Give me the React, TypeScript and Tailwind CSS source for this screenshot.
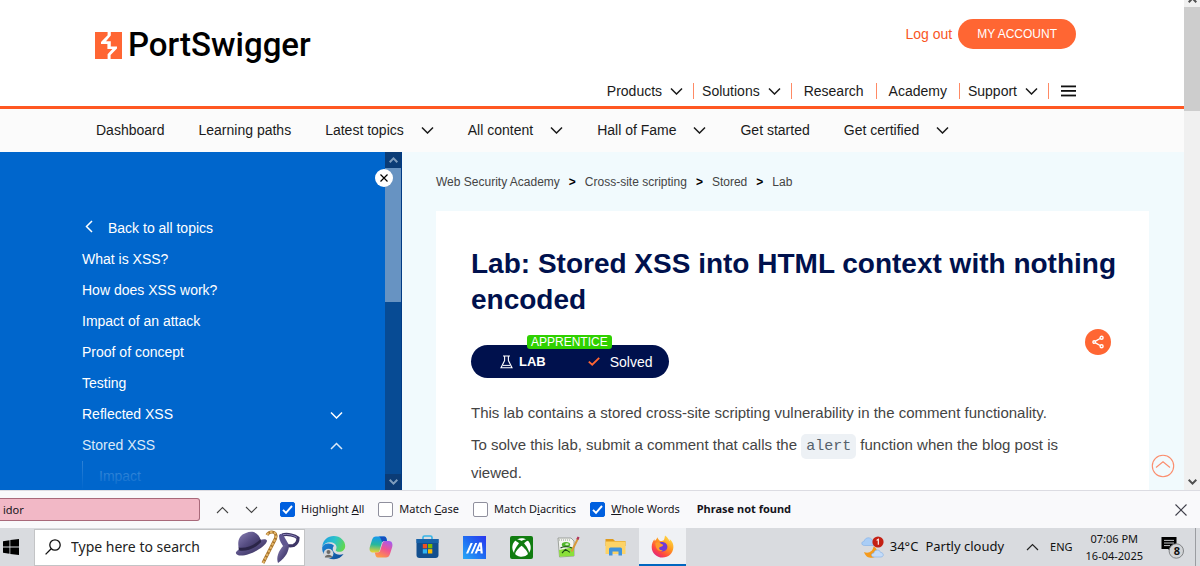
import type { ReactNode } from "react";
import { FaXbox } from "react-icons/fa";

type Direction = "up" | "down" | "left";

const chevronPaths: Record<Direction, string> = {
  down: "M1 1.5 L6.5 7 L12 1.5",
  up: "M1 7 L6.5 1.5 L12 7",
  left: "M7 1 L1.5 6.5 L7 12",
};

function Chevron({ direction = "down", className = "" }: { direction?: Direction; className?: string }) {
  const vertical = direction === "left";
  return (
    <svg
      width={vertical ? 8 : 13}
      height={vertical ? 13 : 8}
      viewBox={vertical ? "0 0 8 13" : "0 0 13 8"}
      fill="none"
      stroke="currentColor"
      strokeWidth="1.5"
      className={className}
      aria-hidden="true"
    >
      <path d={chevronPaths[direction]} />
    </svg>
  );
}

function ScrollArrow({ direction }: { direction: "up" | "down" }) {
  return (
    <svg width="9" height="6" viewBox="0 0 9 6" fill="none" stroke="currentColor" strokeWidth="2" aria-hidden="true">
      <path d={direction === "up" ? "M0.7 5.2 L4.5 1.4 L8.3 5.2" : "M0.7 0.8 L4.5 4.6 L8.3 0.8"} />
    </svg>
  );
}

function Logo() {
  return (
    <a href="#home" className="flex items-center gap-[6px] text-black">
      <svg width="27" height="27" viewBox="0 0 27 27" aria-hidden="true">
        <rect width="27" height="27" fill="#ff6633" />
        <path
          d="M12.6 0 L15.8 0 L15.8 3.6 L11 9.2 L15.8 9.2 L15.8 14.4 L22 14.4 L22 16.4 L15.6 23 L15.6 27 L12.6 27 L12.6 22.2 L17.4 17 L12.4 17 L12.4 12 L6 12 L6 10 L12.6 3.2 Z"
          fill="#fff"
        />
      </svg>
      <span className="font-['Roboto',sans-serif] text-[33px] leading-9 font-medium">PortSwigger</span>
    </a>
  );
}

const mainNav = [
  { label: "Products", menu: true },
  { label: "Solutions", menu: true },
  { label: "Research", menu: false },
  { label: "Academy", menu: false },
  { label: "Support", menu: true },
];

function Header() {
  return (
    <header className="flex justify-between border-b-[3px] border-[#ff5722] bg-white pr-[108px] pb-[7px] pl-[95px] text-sm leading-4">
      <div className="pt-[27px]">
        <Logo />
      </div>
      <div className="flex flex-col items-end gap-[34px] pt-[19px]">
        <div className="flex items-center gap-[6px]">
          <a href="#logout" className="text-[#f9571f]">Log out</a>
          <button type="button" className="h-[30px] rounded-full bg-[#ff6633] px-[19px] text-xs text-white">
            MY ACCOUNT
          </button>
        </div>
        <nav className="flex h-4 items-center text-[#1a1a1a]">
          {mainNav.map((item) =>
            item.menu ? (
              <button
                key={item.label}
                type="button"
                className="flex h-4 items-center gap-2 border-r border-[#ff8a65] pr-[10px] pl-2"
              >
                {item.label}
                <Chevron />
              </button>
            ) : (
              <a key={item.label} href="#nav" className="h-4 border-r border-[#ff8a65] px-3">
                {item.label}
              </a>
            ),
          )}
          <button type="button" aria-label="Menu" className="pl-3">
            <svg width="15" height="12" viewBox="0 0 15 12" fill="#111" aria-hidden="true">
              <rect y="0.5" width="15" height="1.8" />
              <rect y="5" width="15" height="1.8" />
              <rect y="9.6" width="15" height="1.8" />
            </svg>
          </button>
        </nav>
      </div>
    </header>
  );
}

const subNav = [
  { label: "Dashboard", menu: false },
  { label: "Learning paths", menu: false },
  { label: "Latest topics", menu: true },
  { label: "All content", menu: true },
  { label: "Hall of Fame", menu: true },
  { label: "Get started", menu: false },
  { label: "Get certified", menu: true },
];

function SubNav() {
  return (
    <nav className="flex h-[43px] shrink-0 items-center gap-[34px] bg-[#fbfbfb] pb-[2px] pl-24 text-sm whitespace-nowrap text-[#1a1a1a]">
      {subNav.map((item) =>
        item.menu ? (
          <button key={item.label} type="button" className="flex items-center gap-[17px]">
            {item.label}
            <Chevron />
          </button>
        ) : (
          <a key={item.label} href="#sub">{item.label}</a>
        ),
      )}
    </nav>
  );
}

const topics = ["What is XSS?", "How does XSS work?", "Impact of an attack", "Proof of concept", "Testing"];

function Sidebar() {
  return (
    <aside className="relative flex w-[402px] shrink-0 border-r border-[#003a85] bg-[#0066cc] text-sm text-white">
      <ul className="min-w-0 flex-1 overflow-hidden pt-[61px] pr-[42px] pl-[82px] leading-[31px]">
        <li>
          <a href="#topics" className="flex items-center gap-[15px] pl-[3px]">
            <Chevron direction="left" className="mb-1" />
            Back to all topics
          </a>
        </li>
        {topics.map((topic) => (
          <li key={topic}>
            <a href="#topic">{topic}</a>
          </li>
        ))}
        <li>
          <button type="button" className="flex w-full items-center justify-between">
            Reflected XSS
            <Chevron />
          </button>
        </li>
        <li>
          <button type="button" className="flex w-full items-center justify-between text-[#dbe9f8]">
            Stored XSS
            <Chevron direction="up" />
          </button>
          <ul className="border-l border-[#3f8cda] pl-4">
            <li>
              <a href="#impact" className="text-[#6fabe4]">Impact</a>
            </li>
          </ul>
        </li>
      </ul>
      <div className="pointer-events-none absolute bottom-0 left-0 h-10 w-96 bg-linear-to-b from-[#0066cc]/0 to-[#0066cc]" />
      <div className="flex w-4 shrink-0 flex-col bg-[#074b94] text-[#7f9dbd]">
        <div className="flex h-4 items-center justify-center bg-[#0b3c76]">
          <ScrollArrow direction="up" />
        </div>
        <div className="h-[134px] bg-[#6793c2]" />
        <div className="flex-1" />
        <div className="flex h-4 items-center justify-center bg-[#0b3c76]">
          <ScrollArrow direction="down" />
        </div>
      </div>
      <button
        type="button"
        aria-label="Close topics"
        className="absolute top-[17px] right-2 flex size-[18px] items-center justify-center rounded-full bg-white text-black"
      >
        <svg width="8" height="8" viewBox="0 0 8 8" stroke="currentColor" strokeWidth="1.2" aria-hidden="true">
          <path d="M0.5 0.5 L7.5 7.5 M7.5 0.5 L0.5 7.5" />
        </svg>
      </button>
    </aside>
  );
}

const crumbs = ["Web Security Academy", "Cross-site scripting", "Stored", "Lab"];

function LabStatus() {
  return (
    <div className="relative mt-[27px] flex h-[33px] w-[198px] items-center rounded-full bg-[#00114d] pl-[29px] text-white">
      <span className="absolute -top-[10px] left-14 rounded-[3px] bg-[#2fd100] px-1 text-xs leading-[14px]">
        APPRENTICE
      </span>
      <svg width="13" height="14" viewBox="0 0 13 14" fill="none" stroke="currentColor" strokeWidth="1.1" aria-hidden="true">
        <path d="M3 1 H10 M4.6 1 V5.5 L1 12.8 H12 L8.4 5.5 V1" />
        <path d="M3 10.4 H10" strokeWidth="1" />
      </svg>
      <span className="ml-[6px] text-[13px] font-bold">LAB</span>
      <svg width="12" height="9" viewBox="0 0 12 9" fill="none" stroke="#ff6633" strokeWidth="1.9" className="ml-[42px]" aria-hidden="true">
        <path d="M0.8 4.6 L4.2 7.6 L11.2 0.9" />
      </svg>
      <span className="ml-[10px] text-sm">Solved</span>
    </div>
  );
}

function Content() {
  return (
    <main className="relative min-w-0 flex-1 overflow-hidden bg-[#f1fafd] pr-[35px] pl-[34px]">
      <ol className="flex h-[59px] items-center gap-[9px] text-xs whitespace-nowrap text-[#444]">
        {crumbs.map((crumb, index) => (
          <li key={crumb} className="flex gap-[9px]">
            {index > 0 && <span className="font-bold text-black">&gt;</span>}
            <a href="#crumb">{crumb}</a>
          </li>
        ))}
      </ol>
      <article className="relative bg-white pt-[35px] pr-6 pb-12 pl-[35px] text-[15px] leading-[26px] text-[#444]">
        <h1 className="text-[28px] leading-9 font-bold text-[#00114d]">
          Lab: Stored XSS into HTML context with nothing encoded
        </h1>
        <LabStatus />
        <button
          type="button"
          aria-label="Share"
          className="absolute top-[118px] right-[38px] flex size-[26px] items-center justify-center rounded-full bg-[#ff6633]"
        >
          <svg width="12" height="14" viewBox="0 0 12 14" fill="none" stroke="#fff" strokeWidth="1.4" aria-hidden="true">
            <path d="M8.2 3.5 L3.4 6.2 M3.4 7.8 L8.2 10.5" />
            <circle cx="2.2" cy="7" r="1.3" />
            <circle cx="9.6" cy="2.8" r="1.5" />
            <circle cx="9.6" cy="11.2" r="1.5" />
          </svg>
        </button>
        <p className="mt-[22px] mr-5">
          This lab contains a stored cross-site scripting vulnerability in the comment functionality.
        </p>
        <p className="mt-[6px] mr-5">
          To solve this lab, submit a comment that calls the{" "}
          <code className="rounded-[5px] bg-[#edf1f5] px-[5px] py-1 font-['Liberation_Mono',monospace] text-[15px] text-[#56616c]">
            alert
          </code>{" "}
          function when the blog post is viewed.
        </p>
      </article>
      <a href="#top" aria-label="Back to top" className="absolute right-[9px] bottom-3">
        <svg width="24" height="24" viewBox="0 0 24 24" fill="none" stroke="#fb8c6c" strokeWidth="1.1" aria-hidden="true">
          <circle cx="12" cy="12" r="10.7" />
          <path d="M5 13.5 L12 7.8 L19 13.5" />
        </svg>
      </a>
    </main>
  );
}

function PageScrollbar() {
  return (
    <div className="flex w-4 shrink-0 flex-col items-center bg-[#f0f0f0] text-[#505050]">
      <div className="flex h-[7px] items-end overflow-hidden pb-1">
        <ScrollArrow direction="up" />
      </div>
      <div className="h-[104px] w-full bg-[#cdcdcd]" />
      <div className="flex-1" />
      <div className="flex h-4 items-center">
        <ScrollArrow direction="down" />
      </div>
    </div>
  );
}

function FindOption({ checked, children }: { checked?: boolean; children: ReactNode }) {
  return (
    <label className="flex items-center gap-[6px] whitespace-nowrap">
      <span className="relative flex size-[15px]">
        <input
          type="checkbox"
          defaultChecked={checked}
          className="peer size-[15px] appearance-none rounded-[2px] border border-[#8f8f9d] bg-white checked:border-[#0060df] checked:bg-[#0060df]"
        />
        <svg
          width="15"
          height="15"
          viewBox="0 0 15 15"
          fill="none"
          stroke="#fff"
          strokeWidth="1.9"
          className="pointer-events-none invisible absolute inset-0 peer-checked:visible"
          aria-hidden="true"
        >
          <path d="M3 7.8 L6 10.8 L12 4" />
        </svg>
      </span>
      <span>{children}</span>
    </label>
  );
}

function FindBar() {
  return (
    <div className="flex h-[38px] shrink-0 items-center border-t border-[#dcdce2] bg-[#f9f9fb] pr-[13px] font-['Noto_Sans',sans-serif] text-[11px] text-[#15141a]">
      <input
        type="text"
        aria-label="Find in page"
        defaultValue="idor"
        className="h-[23px] w-[200px] rounded-r-[3px] border border-l-0 border-[#a8697a] bg-[#f2b8c6] pl-[3px] outline-none"
      />
      <button type="button" aria-label="Previous match" className="ml-4">
        <svg width="13" height="8" viewBox="0 0 13 8" fill="none" stroke="#444" strokeWidth="1.1" aria-hidden="true">
          <path d="M1 7 L6.5 1.5 L12 7" />
        </svg>
      </button>
      <button type="button" aria-label="Next match" className="ml-4">
        <svg width="13" height="8" viewBox="0 0 13 8" fill="none" stroke="#444" strokeWidth="1.1" aria-hidden="true">
          <path d="M1 1 L6.5 6.5 L12 1" />
        </svg>
      </button>
      <div className="ml-[22px] flex items-center gap-[14px]">
        <FindOption checked>Highlight <u>A</u>ll</FindOption>
        <FindOption>Match <u>C</u>ase</FindOption>
        <FindOption>Match D<u>i</u>acritics</FindOption>
        <FindOption checked><u>W</u>hole Words</FindOption>
      </div>
      <span className="ml-[17px] font-bold whitespace-nowrap">Phrase not found</span>
      <button type="button" aria-label="Close find bar" className="ml-auto">
        <svg width="12" height="12" viewBox="0 0 12 12" stroke="#3f3f4a" strokeWidth="1.1" aria-hidden="true">
          <path d="M0.5 0.5 L11.5 11.5 M11.5 0.5 L0.5 11.5" />
        </svg>
      </button>
    </div>
  );
}

function SearchArt() {
  return (
    <svg width="66" height="34" viewBox="0 0 66 34" aria-hidden="true">
      <defs>
        <linearGradient id="hat" x1="0" y1="0" x2="1" y2="1">
          <stop offset="0" stopColor="#8a80b4" />
          <stop offset="0.5" stopColor="#564d82" />
          <stop offset="1" stopColor="#2d2750" />
        </linearGradient>
      </defs>
      <path d="M1 22 C0 26 7 26.5 14 24 C23 21 31 15 32 11 C32 9 29 8.5 25 10 L4 19 Z" fill="url(#hat)" />
      <path d="M4 20 C2 11 4 5 11 3 C18 0 24 3 26 11 C22 17 12 21 4 20 Z" fill="url(#hat)" />
      <path d="M3.6 17.5 C11 19 21 14.5 25.4 9 L26.2 12 C21 18 11 22 4.2 20.5 Z" fill="#2b2548" />
      <path d="M28 33 L40.5 8.5 C42 4.5 40 2 37 2 C34.5 2 33 3 32 5" fill="none" stroke="#a8742c" strokeWidth="3.2" />
      <path d="M28 33 L40.5 8.5 C42 4.5 40 2 37 2 C34.5 2 33 3 32 5" fill="none" stroke="#e3b567" strokeWidth="2" strokeDasharray="2.4 1.6" />
      <path d="M47 5 C53 3.5 60 5.5 63 8 C63 11 61.5 14 58.5 15.5 C56 16 53.5 15.8 51.5 15.5" fill="none" stroke="#3d3565" strokeWidth="3.2" />
      <path d="M44 6 C44 3.5 47 3.5 48.2 5 L54 15 L49.5 18 C46.5 14 44 10 44 6 Z" fill="#5f5690" />
      <path d="M49 15 L54 16 C53.5 21 51.5 27 43 33 C41 28 43 21 49 15 Z" fill="url(#hat)" />
      <path d="M48 4.6 C53 3.8 58 5 62 7.4" stroke="#8c83b8" strokeWidth="1" fill="none" />
    </svg>
  );
}

function EdgeIcon() {
  return (
    <svg width="25" height="25" viewBox="0 0 25 25" aria-hidden="true">
      <defs>
        <linearGradient id="edgeTop" x1="0" y1="0.3" x2="1" y2="0.6">
          <stop offset="0" stopColor="#1f9fe0" />
          <stop offset="0.5" stopColor="#2cc3c9" />
          <stop offset="1" stopColor="#63d84a" />
        </linearGradient>
        <linearGradient id="edgeLow" x1="0" y1="0" x2="1" y2="1">
          <stop offset="0" stopColor="#1c86d8" />
          <stop offset="1" stopColor="#0d4a94" />
        </linearGradient>
      </defs>
      <path d="M1.2 12 C0.5 19 6 24.5 13 24.2 C17.5 24 20.5 22 22.6 19 C19 20.5 14.5 19.8 12.6 16.8 C11 14 12 11.8 13 10.8 C10 7.6 3.5 7.5 1.2 12 Z" fill="url(#edgeLow)" />
      <path d="M1.2 11.5 C2 5 7 1 12.7 1 C19.5 1 24.2 6 24.2 11 C24.2 14.5 21.6 16.8 18.4 16.8 C16 16.8 14.3 16 14.8 15 C16.8 12 14.7 7.4 9.6 7.2 C5.8 7 3 8.6 1.2 11.5 Z" fill="url(#edgeTop)" />
      <circle cx="7.5" cy="18.6" r="4.9" fill="#d3d6da" />
      <circle cx="7.5" cy="17" r="2" fill="#6d6a66" />
      <path d="M3.8 22.4 C4 18.9 11 18.9 11.2 22.4 Z" fill="#6d6a66" />
    </svg>
  );
}

function CopilotIcon() {
  return (
    <svg width="24" height="22" viewBox="0 0 24 22" aria-hidden="true">
      <defs>
        <linearGradient id="copA" x1="0.3" y1="0" x2="0.2" y2="1">
          <stop offset="0" stopColor="#1597ee" />
          <stop offset="0.5" stopColor="#27b89b" />
          <stop offset="1" stopColor="#f2d32c" />
        </linearGradient>
        <linearGradient id="copB" x1="0.8" y1="0" x2="0.3" y2="1">
          <stop offset="0" stopColor="#a45bf0" />
          <stop offset="0.5" stopColor="#f0568f" />
          <stop offset="1" stopColor="#ff9b43" />
        </linearGradient>
      </defs>
      <path d="M7 0.5 H15 C17 0.5 17.3 2 17.8 4 L18 5 H15.5 C13.5 5 13 6 12.5 8 L10.6 14.5 C10 16.5 9 16.5 7 16.5 H4 C1 16.5 0 14 0.8 11 L3 4 C3.8 1.5 5 0.5 7 0.5 Z" fill="url(#copA)" />
      <path d="M9.5 0.5 H15 C17 0.5 17.3 2 17.8 4 L18 5 H15.5 C14.5 5 13.6 5.3 13.2 6 C12 4 12 1 9.5 0.5 Z" fill="#1550c0" />
      <path d="M17 21.5 H9 C7 21.5 6.7 20 6.2 18 L5.8 16.5 H8.5 C10.5 16.5 11 15.5 11.5 13.5 L13.4 7.5 C14 5.5 15 5 17 5 H20 C23 5 24 8 23.2 11 L21 18 C20.2 20.5 19 21.5 17 21.5 Z" fill="url(#copB)" />
    </svg>
  );
}

function StoreIcon() {
  return (
    <svg width="23" height="24" viewBox="0 0 23 24" aria-hidden="true">
      <path d="M7 5 V2.5 Q7 1 8.5 1 H14.5 Q16 1 16 2.5 V5" fill="none" stroke="#35b4e8" strokeWidth="1.6" />
      <path d="M0.5 4 H22.5 V20 Q22.5 23 19.5 23 H3.5 Q0.5 23 0.5 20 Z" fill="#134f8f" />
      <path d="M0.5 4 H22.5 V8 H0.5 Z" fill="#1863aa" />
      <rect x="6.8" y="9" width="4.3" height="4.3" fill="#f25022" />
      <rect x="12" y="9" width="4.3" height="4.3" fill="#7fba00" />
      <rect x="6.8" y="14.2" width="4.3" height="4.3" fill="#2fb4f2" />
      <rect x="12" y="14.2" width="4.3" height="4.3" fill="#ffb900" />
    </svg>
  );
}

function ArmouryIcon() {
  return (
    <svg width="23" height="23" viewBox="0 0 23 23" aria-hidden="true">
      <defs>
        <linearGradient id="arm" x1="1" y1="0" x2="0" y2="1">
          <stop offset="0" stopColor="#2a35ee" />
          <stop offset="0.5" stopColor="#1f6cf2" />
          <stop offset="1" stopColor="#28a9f7" />
        </linearGradient>
      </defs>
      <rect width="23" height="23" fill="url(#arm)" />
      <path d="M3 17.5 L7.6 7 H9.8 L5.2 17.5 Z M7.6 17.5 L12.2 7 H14.2 L9.6 17.5 Z" fill="#fff" />
      <path d="M11.6 17.5 L16.2 6.6 H18.8 L19.8 17.5 H17.6 L17.4 15 H14.8 L13.8 17.5 Z M15.6 13.2 H17.3 L17 9.6 Z" fill="#fff" fillRule="evenodd" />
    </svg>
  );
}

function NotepadIcon() {
  return (
    <svg width="23" height="22" viewBox="0 0 23 22" aria-hidden="true">
      <path d="M1 2 H14 L17 5 V20 L2.5 21 Z" fill="#f3f5f0" stroke="#8a8f88" strokeWidth="0.8" />
      <path d="M2 14 L17 11 V20 L2.5 20.7 Z" fill="#8be03a" />
      <ellipse cx="9" cy="8.5" rx="4.2" ry="2.6" fill="#4fb52a" />
      <ellipse cx="10" cy="8.2" rx="1.8" ry="1" fill="#d7f0c8" />
      <path d="M3.5 12 C6 10.4 12 10.4 15 12 M5 17 L8.5 13.4 L13 16.4" stroke="#1d4d17" strokeWidth="1.1" fill="none" />
      <path d="M2 4 H14" stroke="#9aa09a" strokeWidth="1" strokeDasharray="1 1" />
      <path d="M14.5 15.5 L21 2.5" stroke="#d99a3a" strokeWidth="2" />
      <path d="M20.3 3.6 L21.6 1" stroke="#b0345a" strokeWidth="2.2" />
    </svg>
  );
}

function FolderIcon() {
  return (
    <svg width="21" height="18" viewBox="0 0 21 18" aria-hidden="true">
      <path d="M0.5 1 H8 L10 3 H20.5 V8 H0.5 Z" fill="#e09b1c" />
      <path d="M0.5 3.5 H20.5 V16 H0.5 Z" fill="#fdd367" />
      <path d="M4 17.5 V11 Q4 9.5 5.5 9.5 H15.5 Q17 9.5 17 11 V17.5 H13.5 V13.5 H7.5 V17.5 Z" fill="#3f92dc" />
    </svg>
  );
}

function FirefoxIcon() {
  return (
    <svg width="23" height="23" viewBox="0 0 23 23" aria-hidden="true">
      <defs>
        <linearGradient id="fox" x1="0.85" y1="0.05" x2="0.2" y2="0.95">
          <stop offset="0" stopColor="#ffe14a" />
          <stop offset="0.4" stopColor="#ff9a1f" />
          <stop offset="0.75" stopColor="#ff4a3e" />
          <stop offset="1" stopColor="#e1257f" />
        </linearGradient>
      </defs>
      <path d="M14 0.5 C17 2.5 18 5 18.5 6.2 C19 5.8 18.8 4.5 18.6 4 C21.6 6.4 22.6 9.5 22.4 12.3 C22 18.4 17.4 22.6 11.6 22.6 C5.5 22.6 0.7 18 0.7 12 C0.7 8.5 2 6 3.4 4.2 L3.8 6 C4.8 5 5.6 4.2 6.4 2.2 C7 3.8 8 5.4 9.5 6 C11 6 12.2 6 13 4.8 C13.7 3.6 13.6 2 14 0.5 Z" fill="url(#fox)" />
      <path d="M9.6 7 C13.6 6.4 16.6 8.8 16.4 12 C16.2 15 13.8 16.6 11.4 16.4 C8.4 16.2 6.6 13.8 7 11.6 C8 11 10 12 11.6 10.8 C11 9.4 8.6 9.8 7.6 8.6 Z" fill="#6f3ad6" />
      <path d="M4.4 8 C6 6.8 8.4 7.2 9.6 8.4 C10.4 9.2 12.4 9 12 10.4 C11 11.8 9.4 11.2 8.4 12.4 C7.4 13.6 9.4 15.6 12 15 C9 17.6 4.2 15 4.4 8 Z" fill="#ff9a2a" />
    </svg>
  );
}

const apps: { name: string; icon: ReactNode; active?: boolean }[] = [
  { name: "Edge", icon: <EdgeIcon /> },
  { name: "Copilot", icon: <CopilotIcon /> },
  { name: "Store", icon: <StoreIcon /> },
  { name: "Armoury", icon: <ArmouryIcon /> },
  {
    name: "Xbox",
    icon: (
      <span className="flex size-[23px] items-center justify-center rounded-[2px] bg-[#107c10]">
        <FaXbox size={19} color="#fff" />
      </span>
    ),
  },
  { name: "Notepad", icon: <NotepadIcon /> },
  { name: "Files", icon: <FolderIcon /> },
  { name: "Firefox", icon: <FirefoxIcon />, active: true },
];

function WeatherIcon() {
  return (
    <svg width="23" height="23" viewBox="0 0 23 23" aria-hidden="true">
      <path d="M3 16 C8 18 12 15 12.5 10.5 C17 12 19 22 9.5 21.8 C6 21.6 4 19 3 16 Z" fill="#f59a1b" />
      <path d="M3.5 9.5 C0 9.5 0 5.4 3.2 5.2 C4 1 10 0.6 11.4 4.4 C15 4.4 15.4 9.5 12 9.5 Z" fill="#a9cdf6" stroke="#7faee8" strokeWidth="0.6" />
      <path d="M13 21 C9.6 21 9.8 17 12.8 17 C13.4 13.4 18.6 13 19.6 16.4 C23 16.4 23.2 21 20 21 Z" fill="#c4dcf9" stroke="#7faee8" strokeWidth="0.6" />
      <circle cx="17" cy="6" r="5.6" fill="#c42014" />
      <path d="M15.6 4.4 L17.3 3.2 V8.8" fill="none" stroke="#fff" strokeWidth="1.1" />
    </svg>
  );
}

function Taskbar() {
  return (
    <footer className="flex h-[38px] shrink-0 items-center bg-[#d9dbdf] pr-1 font-['Noto_Sans',sans-serif] whitespace-nowrap text-[#111]">
      <button type="button" aria-label="Start" className="pr-[15px] pl-[3px]">
        <svg width="16" height="16" viewBox="0 0 16 16" fill="#000" aria-hidden="true">
          <path d="M0 2.2 L6.5 1.2 V7.6 H0 Z M7.3 1.1 L16 0 V7.6 H7.3 Z M0 8.4 H6.5 V14.8 L0 13.8 Z M7.3 8.4 H16 V16 L7.3 14.9 Z" />
        </svg>
      </button>
      <label className="flex h-[37px] w-[271px] items-center border border-[#c3c4c6] bg-white pr-[3px] pl-[10px]">
        <svg width="16" height="16" viewBox="0 0 16 16" fill="none" stroke="#111" strokeWidth="1.3" aria-hidden="true">
          <circle cx="10" cy="6" r="5.2" />
          <path d="M6.2 9.8 L0.6 15.4" />
        </svg>
        <input
          type="text"
          aria-label="Search"
          placeholder="Type here to search"
          className="ml-[10px] min-w-0 flex-1 text-sm outline-none placeholder:text-[#222]"
        />
        <SearchArt />
      </label>
      <div className="ml-[5px] flex h-full">
        {apps.map((app) =>
          app.active ? (
            <button
              key={app.name}
              type="button"
              aria-label={app.name}
              className="flex h-full w-[47px] items-center justify-center border-b-2 border-[#0067c0] bg-[#eff1f4]"
            >
              {app.icon}
            </button>
          ) : (
            <button
              key={app.name}
              type="button"
              aria-label={app.name}
              className="flex h-full w-[47px] items-center justify-center"
            >
              {app.icon}
            </button>
          ),
        )}
      </div>
      <div className="ml-auto flex h-full items-center text-[13px]">
        <WeatherIcon />
        <span className="ml-[6px]">34°C</span>
        <span className="ml-[7px]">Partly cloudy</span>
        <button type="button" aria-label="Hidden icons" className="ml-[22px]">
          <svg width="13" height="8" viewBox="0 0 13 8" fill="none" stroke="#222" strokeWidth="1.2" aria-hidden="true">
            <path d="M1 7 L6.5 1.5 L12 7" />
          </svg>
        </button>
        <span className="ml-[11px] text-[11px]">ENG</span>
        <time className="ml-[13px] text-center text-[11px] leading-[17px]">
          07:06 PM
          <br />
          16-04-2025
        </time>
        <div className="relative ml-[18px] h-6 w-6">
          <svg width="24" height="24" viewBox="0 0 24 24" aria-hidden="true">
            <path d="M0.5 2 H15.5 V14 H11 V17.5 L7 14 H0.5 Z" fill="#000" />
            <path d="M3 5.4 H13 M3 8 H13 M3 10.6 H9" stroke="#d9dbdf" strokeWidth="0.9" />
            <circle cx="15.3" cy="16" r="7.2" fill="#d2d4d7" stroke="#77797c" strokeWidth="0.9" />
          </svg>
          <span className="absolute right-[5px] bottom-[2px] text-[11px] leading-3 font-bold">8</span>
        </div>
        <div className="ml-[10px] h-full w-px bg-[#9b9da1]" />
      </div>
    </footer>
  );
}

export default function App() {
  return (
    <div className="flex h-screen flex-col overflow-hidden bg-white font-['Liberation_Sans',Arial,sans-serif]">
      <div className="flex min-h-0 flex-1">
        <div className="flex min-w-0 flex-1 flex-col">
          <Header />
          <SubNav />
          <div className="flex min-h-0 flex-1">
            <Sidebar />
            <Content />
          </div>
        </div>
        <PageScrollbar />
      </div>
      <FindBar />
      <Taskbar />
    </div>
  );
}
